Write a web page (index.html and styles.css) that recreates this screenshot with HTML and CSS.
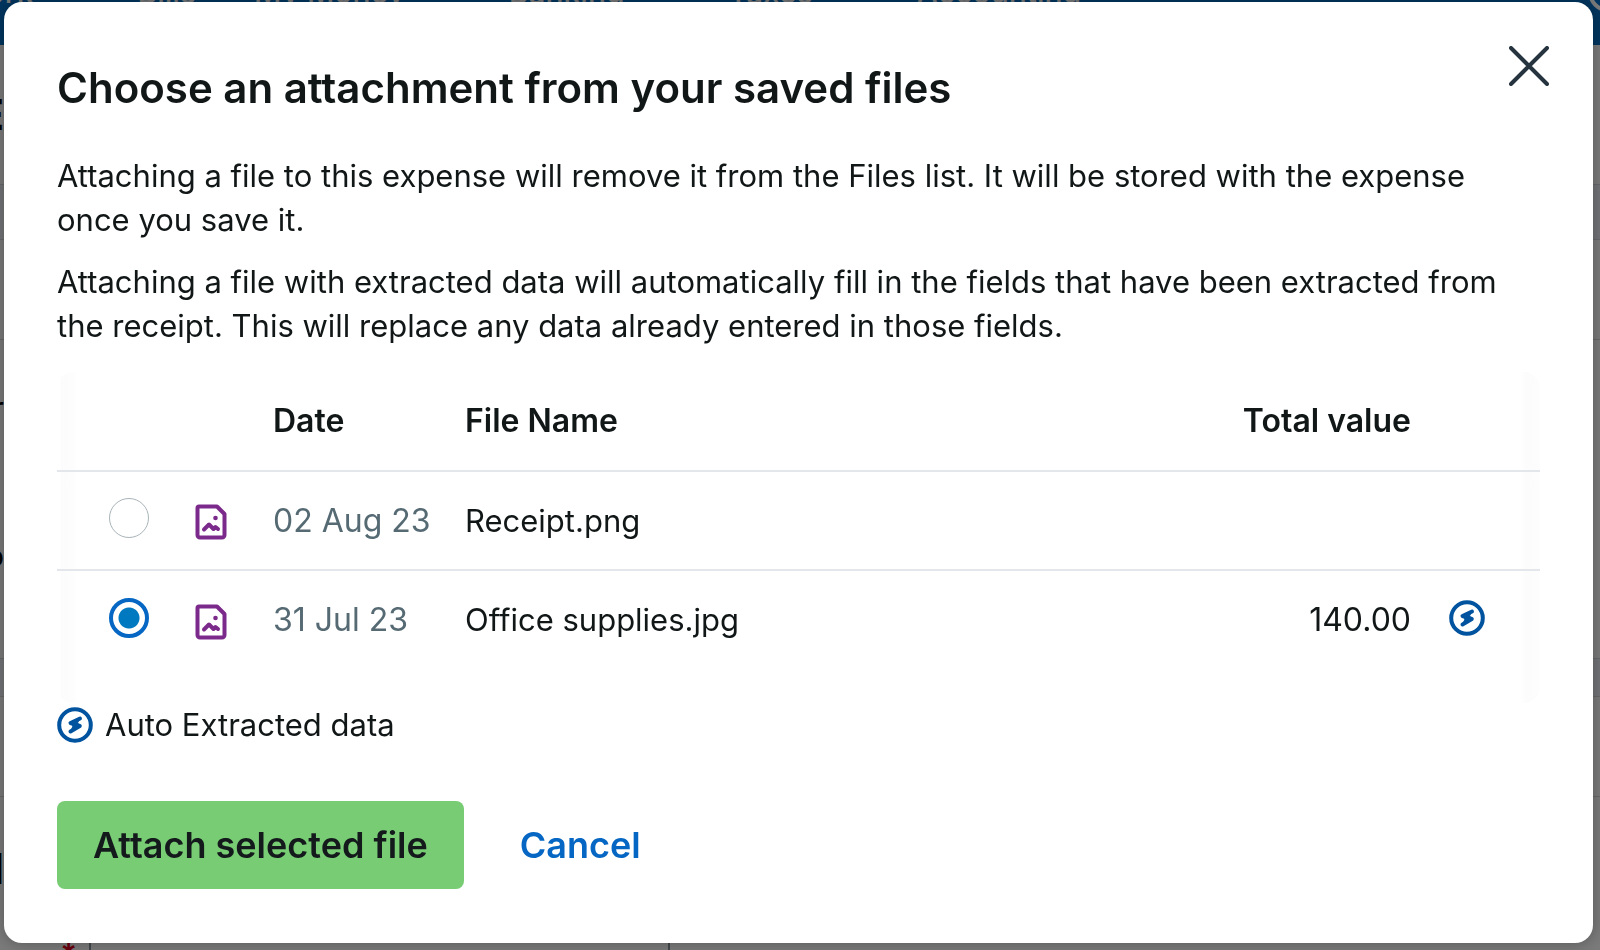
FILE: index.html
```html
<!DOCTYPE html>
<html lang="en">
<head>
    <meta charset="UTF-8"/>
    <meta content="width=device-width, initial-scale=1.0" name="viewport"/>
    <title>Choose an attachment</title>
    <link rel="stylesheet" href="styles.css">
</head>
<body>
<!-- Shared icons -->
<svg class="sprite" aria-hidden="true">
    <symbol id="icon-image" viewBox="0 0 32 36">
        <path d="M4 2.500H22L29.500 10V31a2.500 2.500 0 0 1-2.500 2.500H5A2.500 2.500 0 0 1 2.500 31V4A1.500 1.500 0 0 1 4 2.500Z" fill="none" stroke="#7b2a8b" stroke-width="4" stroke-linejoin="round"/>
        <circle cx="20.500" cy="14" r="2.300" fill="#7b2a8b"/>
        <path d="M9 25.500L14 20.500L18.500 25L20.500 23L23 25" fill="none" stroke="#7b2a8b" stroke-width="4" stroke-linecap="round" stroke-linejoin="round"/>
    </symbol>
    <symbol id="icon-auto" viewBox="0 0 36 36">
        <circle cx="18" cy="18" r="15.800" fill="none" stroke="#00539f" stroke-width="4"/>
        <path d="M23 11.500L13.500 16L22.800 19L13.500 24.500" fill="none" stroke="#00539f" stroke-width="4" stroke-linecap="round" stroke-linejoin="round"/>
        <path d="M14 15L23 11L20.500 16L23 19L13.500 25L16 19Z" fill="#00539f" stroke="#00539f" stroke-width="1"/>
    </symbol>
    <symbol id="icon-chevron" viewBox="0 0 16 10">
        <path d="M2 2L8 8L14 2" fill="none" stroke="#ffffff" stroke-width="2"/>
    </symbol>
</svg>

<!-- Page behind the dialog -->
<div class="page" aria-hidden="true">
    <div class="topbar">
        <nav class="topnav">
            <span class="nav-item">Work <svg><use href="#icon-chevron"/></svg></span>
            <span class="nav-item">Bills</span>
            <span class="nav-item">My Money <svg><use href="#icon-chevron"/></svg></span>
            <span class="nav-item">Banking <svg><use href="#icon-chevron"/></svg></span>
            <span class="nav-item">Taxes <svg><use href="#icon-chevron"/></svg></span>
            <span class="nav-item">Accounting <svg><use href="#icon-chevron"/></svg></span>
            <span class="nav-help"></span>
        </nav>
    </div>
    <div class="page-row title-row"><span class="edge-text big">E</span></div>
    <div class="page-row band"></div>
    <div class="page-row"></div>
    <div class="page-row tall-row">
        <span class="edge-text">r</span>
        <span class="edge-text">o</span>
    </div>
    <div class="page-row band small-band"></div>
    <div class="page-row"></div>
    <div class="page-row form-row">
        <span class="edge-text big">I</span>
        <div class="form-line">
            <span class="required">*</span>
            <span class="field"></span>
        </div>
    </div>
</div>

<!-- Dialog -->
<div class="backdrop">
    <form class="modal" role="dialog" aria-labelledby="modal-title">
        <div class="modal-header">
            <h1 class="modal-title" id="modal-title">Choose an attachment from your saved files</h1>
            <button class="close-button" type="button" aria-label="Close">
                <svg viewBox="0 0 40 40">
                    <path d="M2 2L38 38M38 2L2 38" fill="none" stroke="#25343f" stroke-width="4" stroke-linecap="round"/>
                </svg>
            </button>
        </div>

        <p class="modal-text">Attaching a file to this expense will remove it from the Files list. It will be stored with the expense once you save it.</p>
        <p class="modal-text">Attaching a file with extracted data will automatically fill in the fields that have been extracted from the receipt. This will replace any data already entered in those fields.</p>

        <div class="table-wrap">
            <table class="files">
                <thead>
                <tr>
                    <th class="col-radio"></th>
                    <th class="col-icon"></th>
                    <th class="col-date">Date</th>
                    <th>File Name</th>
                    <th class="col-value">Total value</th>
                    <th class="col-auto"></th>
                </tr>
                </thead>
                <tbody>
                <tr>
                    <td class="col-radio"><input type="radio" name="file" id="file-1" aria-label="Receipt.png"></td>
                    <td class="col-icon"><svg class="file-icon"><use href="#icon-image"/></svg></td>
                    <td class="col-date">02 Aug 23</td>
                    <td><label for="file-1">Receipt.png</label></td>
                    <td class="col-value"></td>
                    <td class="col-auto"></td>
                </tr>
                <tr>
                    <td class="col-radio"><input type="radio" name="file" id="file-2" aria-label="Office supplies.jpg" checked></td>
                    <td class="col-icon"><svg class="file-icon"><use href="#icon-image"/></svg></td>
                    <td class="col-date">31 Jul 23</td>
                    <td><label for="file-2">Office supplies.jpg</label></td>
                    <td class="col-value">140.00</td>
                    <td class="col-auto"><svg class="auto-icon"><use href="#icon-auto"/></svg></td>
                </tr>
                </tbody>
            </table>
        </div>

        <div class="legend">
            <svg class="auto-icon"><use href="#icon-auto"/></svg>
            <span>Auto Extracted data</span>
        </div>

        <div class="actions">
            <button class="attach-button" type="button">Attach selected file</button>
            <a class="cancel-link" href="#">Cancel</a>
        </div>
    </form>
</div>
</body>
</html>
```

FILE: styles.css
```css
* {
    box-sizing: border-box;
}

body {
    margin: 0;
    height: 100vh;
    overflow: hidden;
    font-family: Inter, "Liberation Sans", sans-serif;
    font-size: 31px;
    line-height: 44px;
    color: #111617;
    background-color: #ffffff;
}

.sprite {
    position: absolute;
    width: 0;
    height: 0;
}

/* Page behind the dialog */
.page {
    height: 100vh;
    overflow: hidden;
    display: flex;
    flex-direction: column;
}

.topbar {
    flex: none;
    height: 45px;
    overflow: hidden;
    background-color: #0070c8;
}

.topnav {
    display: flex;
    align-items: center;
    gap: 58px;
    margin-top: -30px;
    margin-left: -42px;
    color: #ffffff;
    font-size: 30px;
    font-weight: 500;
}

.nav-item {
    display: flex;
    align-items: center;
    gap: 30px;
    white-space: nowrap;
}

.nav-item svg {
    width: 16px;
    height: 10px;
}

.nav-help {
    width: 40px;
    height: 40px;
    margin-left: auto;
    margin-right: -28px;
    border: 4px solid #ffffff;
    border-radius: 50%;
}

.page-row {
    flex: none;
    height: 100px;
    border-bottom: 1px solid #d5dade;
}

.title-row {
    height: 140px;
    padding-top: 48px;
}

.band {
    height: 55px;
    background-color: #eef2f8;
}

.tall-row {
    height: 319px;
    padding-top: 46px;
}

.tall-row .edge-text {
    margin-bottom: 104px;
}

.small-band {
    height: 38px;
}

.form-row {
    height: 400px;
    padding-top: 50px;
}

/* Labels that end just past the left side of the window */
.edge-text {
    display: flex;
    justify-content: flex-end;
    width: 4px;
    color: #000000;
}

.edge-text.big {
    font-size: 42px;
    font-weight: 700;
}

.form-line {
    display: flex;
    gap: 12px;
    padding-top: 42px;
    padding-left: 60px;
}

.required {
    color: #e00020;
    font-weight: 700;
}

.field {
    width: 581px;
    height: 80px;
    border: 2px solid #8a979e;
}

/* Dialog */
.backdrop {
    position: fixed;
    inset: 0;
    padding: 2px 7px 8px 4px;
    background-color: rgba(0, 0, 0, 0.52);
}

.modal {
    padding: 60px 53px 54px;
    border-radius: 18px;
    background-color: #ffffff;
    box-shadow: 0 0 16px rgba(0, 0, 0, 0.3);
}

.modal-header {
    display: flex;
    justify-content: space-between;
    align-items: center;
    margin-bottom: 40px;
}

.modal-title {
    margin: 0;
    font-size: 42px;
    line-height: 52px;
    font-weight: 600;
}

.close-button {
    width: 40px;
    height: 40px;
    margin-top: -44px;
    margin-right: -9px;
    padding: 0;
    border: none;
    background: none;
    cursor: pointer;
}

.close-button svg {
    display: block;
    width: 40px;
    height: 40px;
}

.modal-text {
    margin: 0 0 18px;
}

/* Files table */
.table-wrap {
    margin-top: 24px;
    padding-bottom: 34px;
    border-radius: 16px;
    background: linear-gradient(to right, #ffffff 3px, #fcfcfc 4px, #fdfdfd 16px, #ffffff 20px, #ffffff calc(100% - 20px), #fcfcfc calc(100% - 14px), #fdfdfd 100%);
}

.files {
    width: 100%;
    border-collapse: collapse;
    table-layout: fixed;
}

.files th,
.files td {
    height: 99px;
    padding: 0;
    text-align: left;
    vertical-align: middle;
}

.files th {
    font-size: 32px;
    font-weight: 600;
}

.files tbody tr {
    border-top: 2px solid #e3e7ec;
}

.files .col-radio {
    width: 138px;
    padding-left: 52px;
    padding-bottom: 5px;
}

.files .col-icon {
    width: 78px;
    padding-top: 3px;
}

.files .col-date {
    width: 192px;
    white-space: nowrap;
}

.files td.col-date {
    color: #566a74;
    font-size: 32px;
}

.files .col-value {
    width: 240px;
    font-size: 32px;
    text-align: right;
}

.files .col-auto {
    width: 129px;
    padding-left: 38px;
    padding-bottom: 5px;
}

.files input {
    appearance: none;
    display: block;
    width: 40px;
    height: 40px;
    margin: 0;
    border: 1px solid #a9b4b9;
    border-radius: 50%;
    background-color: #ffffff;
}

.files input:checked {
    border: 4px solid #0567c3;
    background: radial-gradient(circle, #0079c1 10px, #ffffff 11px);
}

.file-icon {
    display: block;
    width: 32px;
    height: 36px;
}

.auto-icon {
    display: block;
    width: 36px;
    height: 36px;
}

.legend {
    display: flex;
    align-items: center;
    gap: 12px;
    margin-bottom: 54px;
}

/* Buttons */
.actions {
    display: flex;
    align-items: center;
    gap: 56px;
    font-size: 36px;
}

.attach-button {
    padding: 21px 36px;
    border: none;
    border-radius: 8px;
    background-color: #78cc74;
    color: #14191c;
    font: inherit;
    font-weight: 600;
    line-height: 46px;
    cursor: pointer;
}

.cancel-link {
    color: #0567c3;
    font-weight: 600;
    text-decoration: none;
}
```
